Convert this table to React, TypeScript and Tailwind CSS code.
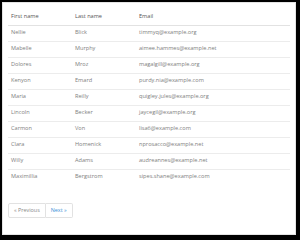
const rows = [
  ['Nellie', 'Blick', 'timmyq@example.org'],
  ['Mabelle', 'Murphy', 'aimee.hammes@example.net'],
  ['Dolores', 'Mroz', 'magalgill@example.org'],
  ['Kenyon', 'Emard', 'purdy.nia@example.com'],
  ['Maria', 'Reilly', 'quigley.jules@example.org'],
  ['Lincoln', 'Becker', 'jaycegil@example.org'],
  ['Carmon', 'Von', 'lisa6@example.com'],
  ['Clara', 'Homenick', 'nprosacco@example.net'],
  ['Willy', 'Adams', 'audreannes@example.net'],
  ['Maximillia', 'Bergstrom', 'sipes.shane@example.com'],
]

export default function App() {
  return (
    <div className="w-[300px] h-[240px] bg-black pt-[2px] pl-[2px] pr-[4px] pb-[5px] font-['Open_Sans',sans-serif]">
      <div className="h-full bg-white border border-[#e4e4e4] pl-[5px] pr-[5px] pt-[6px]">
        <table className="w-full border-collapse text-[5.6px] leading-none">
          <thead>
            <tr className="h-[16px] border-b border-[#e2e2e2] text-[#555]">
              <th className="w-[64px] pl-[3px] text-left font-medium">First name</th>
              <th className="w-[64px] pl-[3px] text-left font-medium">Last name</th>
              <th className="pl-[3px] text-left font-medium">Email</th>
            </tr>
          </thead>
          <tbody className="text-[#808080]">
            {rows.map((r, i) => (
              <tr key={i} className={`h-[16px] ${i < rows.length - 1 ? 'border-b border-[#ececec]' : ''}`}>
                <td className="pl-[3px]">{r[0]}</td>
                <td className="pl-[3px]">{r[1]}</td>
                <td className="pl-[3px]">{r[2]}</td>
              </tr>
            ))}
          </tbody>
        </table>
        <div className="mt-[18px] flex text-[5.4px] leading-none">
          <span className="h-[15px] px-[5px] flex items-center border border-[#e2e2e2] rounded-l-[2px] text-[#888]">« Previous</span>
          <span className="h-[15px] px-[5px] flex items-center border border-l-0 border-[#e2e2e2] rounded-r-[2px] text-[#3b8fd6]">Next »</span>
        </div>
      </div>
    </div>
  )
}
